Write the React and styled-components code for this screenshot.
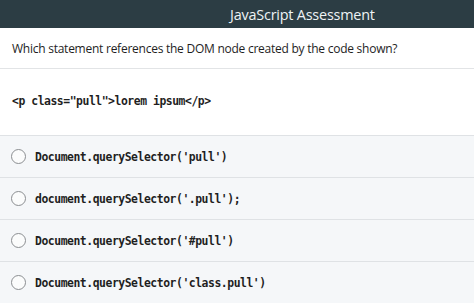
import React from "react";
import styled, { createGlobalStyle } from "styled-components";

const Global = createGlobalStyle`
  html, body { margin: 0; padding: 0; background: #ffffff; }
  body { font-family: "Open Sans", "Noto Sans", sans-serif; overflow: hidden; }
`;

const Page = styled.div`
  width: 474px;
  height: 303px;
  display: flex;
  flex-direction: column;
  overflow: hidden;
`;

const Header = styled.header`
  height: 29px;
  background: #2c3d44;
  display: flex;
  align-items: center;
  padding-left: 230px;
  box-sizing: border-box;
`;

const Title = styled.h1`
  margin: 0;
  font-family: "Open Sans", "Noto Sans", sans-serif;
  font-size: 14.4px;
  letter-spacing: -0.2px;
  font-weight: 400;
  color: #eef3f5;
`;

const Question = styled.div`
  height: 42px;
  box-sizing: border-box;
  border-bottom: 1px solid #e2e4e6;
  display: flex;
  align-items: center;
  padding-left: 12px;
  font-size: 12px;
  letter-spacing: -0.25px;
  color: #1e1e1e;
  font-weight: 500;
`;

const CodeBlock = styled.div`
  height: 67px;
  box-sizing: border-box;
  display: flex;
  align-items: center;
  padding-left: 12px;
  padding-bottom: 2px;
`;

const Code = styled.code`
  font-family: "DejaVu Sans Mono", "Liberation Mono", monospace;
  font-size: 11.4px;
  letter-spacing: -0.45px;
  font-weight: 700;
  color: #1f1f1f;
  white-space: pre;
`;

const Options = styled.ul`
  list-style: none;
  margin: 0;
  padding: 0;
  display: flex;
  flex-direction: column;
`;

const Option = styled.li`
  height: 42px;
  box-sizing: border-box;
  background: #f5f7f9;
  border-top: 1px solid #dfe2e5;
  display: flex;
  align-items: center;
  padding-left: 11px;
  gap: 9px;
`;

const Radio = styled.span`
  width: 15px;
  height: 15px;
  box-sizing: border-box;
  border-radius: 50%;
  border: 1.2px solid #8b8e91;
  background: #fbfcfc;
  flex-shrink: 0;
`;

const options = [
  "Document.querySelector('pull')",
  "document.querySelector('.pull');",
  "Document.querySelector('#pull')",
  "Document.querySelector('class.pull')",
];

export default function App() {
  return (
    <Page>
      <Global />
      <Header>
        <Title>JavaScript Assessment</Title>
      </Header>
      <Question>Which statement references the DOM node created by the code shown?</Question>
      <CodeBlock>
        <Code>{'<p class="pull">lorem ipsum</p>'}</Code>
      </CodeBlock>
      <Options>
        {options.map((o) => (
          <Option key={o}>
            <Radio />
            <Code>{o}</Code>
          </Option>
        ))}
      </Options>
    </Page>
  );
}
